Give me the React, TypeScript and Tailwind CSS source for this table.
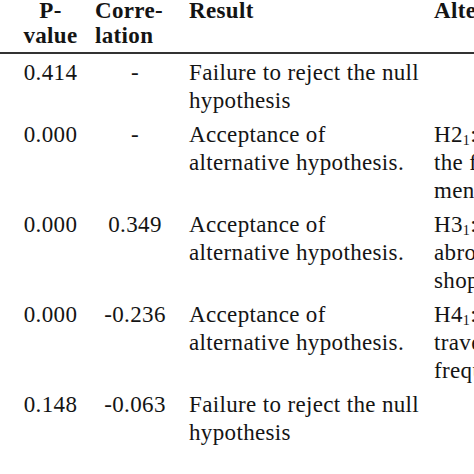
import React from "react";

const Sub = ({ children }: { children: React.ReactNode }) => (
  <span className="relative top-[3px] text-[14px] leading-none">{children}</span>
);

type Row = {
  p: string;
  c: string;
  result: string[];
  alt: React.ReactNode[];
};

const rows: Row[] = [
  { p: "0.414", c: "-", result: ["Failure to reject the null", "hypothesis"], alt: [] },
  {
    p: "0.000",
    c: "-",
    result: ["Acceptance of", "alternative hypothesis."],
    alt: [
      <>H2<Sub>1</Sub>: There is a relationship between</>,
      "the frequency of travel and the",
      "mentioned variables.",
    ],
  },
  {
    p: "0.000",
    c: "0.349",
    result: ["Acceptance of", "alternative hypothesis."],
    alt: [
      <>H3<Sub>1</Sub>: There is a relationship between</>,
      "abroad travel and the frequency of",
      "shopping.",
    ],
  },
  {
    p: "0.000",
    c: "-0.236",
    result: ["Acceptance of", "alternative hypothesis."],
    alt: [
      <>H4<Sub>1</Sub>: There is a relationship between</>,
      "travel and the shopping",
      "frequency.",
    ],
  },
  { p: "0.148", c: "-0.063", result: ["Failure to reject the null", "hypothesis"], alt: [] },
];

export default function App() {
  return (
    <div
      className="w-[474px] h-[474px] overflow-hidden bg-white text-[#141414] text-[23px] tracking-[0.35px]"
      style={{ fontFamily: '"Liberation Serif", "Times New Roman", serif' }}
    >
      <div className="w-[760px]">
        <div className="flex font-bold leading-[25px] mt-[-2px] pb-[4px]">
          <div className="w-[95px] pl-[6px] text-center shrink-0">
            <div>P-</div>
            <div>value</div>
          </div>
          <div className="w-[80px] text-left shrink-0">
            <div>Corre-</div>
            <div>lation</div>
          </div>
          <div className="w-[259px] pl-[14px] shrink-0">Result</div>
          <div className="w-[320px] shrink-0">Alternative hypothesis</div>
        </div>
        <div className="h-[2px] bg-[#333333]" />
        <div className="mt-[2px] leading-[28px]">
          {rows.map((r, i) => (
            <div key={i} className="flex py-[3px]">
              <div className="w-[95px] pl-[6px] text-center shrink-0">{r.p}</div>
              <div className="w-[80px] text-center shrink-0">{r.c}</div>
              <div className="w-[259px] pl-[14px] shrink-0">
                {r.result.map((t, j) => (
                  <div key={j} className="whitespace-nowrap">{t}</div>
                ))}
              </div>
              <div className="w-[320px] shrink-0">
                {r.alt.map((t, j) => (
                  <div key={j} className="whitespace-nowrap">{t}</div>
                ))}
              </div>
            </div>
          ))}
        </div>
      </div>
    </div>
  );
}
